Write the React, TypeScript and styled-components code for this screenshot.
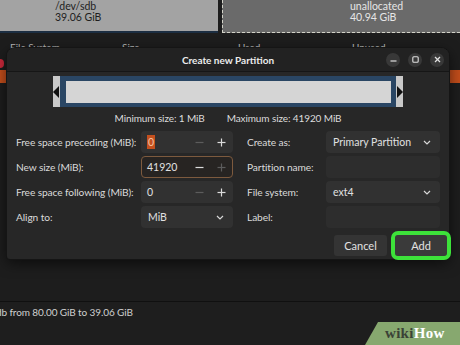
import styled, { createGlobalStyle } from 'styled-components'

const GlobalStyle = createGlobalStyle`
    html, body {
        margin: 0;
        padding: 0;
        background: #1d1d1d;
    }
    body {
        font-family: Lato, 'Noto Sans', sans-serif;
        font-size: 10px;
        color: #dedede;
    }
`

const ChevronDown = () => (
    <svg width='8' height='5' viewBox='0 0 8 5'>
        <polyline points='1,1 4,4 7,1' fill='none' stroke='#d8d8d8' strokeWidth='1.2' />
    </svg>
)

const MinusIcon = ({ dim }: { dim?: boolean }) => (
    <svg width='9' height='9' viewBox='0 0 9 9'>
        <line x1='0.5' y1='4.5' x2='8.5' y2='4.5' stroke={dim ? '#5c5c5c' : '#dcdcdc'} strokeWidth='1.2' />
    </svg>
)

const PlusIcon = ({ dim }: { dim?: boolean }) => (
    <svg width='9' height='9' viewBox='0 0 9 9'>
        <line x1='0.5' y1='4.5' x2='8.5' y2='4.5' stroke={dim ? '#5c5c5c' : '#dcdcdc'} strokeWidth='1.2' />
        <line x1='4.5' y1='0.5' x2='4.5' y2='8.5' stroke={dim ? '#5c5c5c' : '#dcdcdc'} strokeWidth='1.2' />
    </svg>
)

function SpinBox({ value, minusDim, plusDim, focused, selected }: any) {
    return (
        <Spin $focused={focused}>
            <SpinValue>{selected ? <Selection>{value}</Selection> : value}</SpinValue>
            <SpinButton>
                <MinusIcon dim={minusDim} />
            </SpinButton>
            <SpinButton>
                <PlusIcon dim={plusDim} />
            </SpinButton>
        </Spin>
    )
}

function Combo({ value }: { value: string }) {
    return (
        <Select>
            <span>{value}</span>
            <ChevronDown />
        </Select>
    )
}

export default function App() {
    return (
        <>
            <GlobalStyle />
            <Screen>
                <DiskMap>
                    <PartBlock $kind='used'>
                        <div>/dev/sdb</div>
                        <div>39.06 GiB</div>
                    </PartBlock>
                    <PartBlock $kind='free'>
                        <div>unallocated</div>
                        <div>40.94 GiB</div>
                    </PartBlock>
                </DiskMap>
                <ColumnHeads>
                    <span>File System</span>
                    <span>Size</span>
                    <span>Used</span>
                    <span>Unused</span>
                </ColumnHeads>
                <PartList>
                    <ListRow>
                        <Dot />
                    </ListRow>
                    <ListRow $selected />
                </PartList>
                <Spacer />
                <StatusBar>
                    <StatusText>Shrink /dev/sdb from 80.00 GiB to 39.06 GiB</StatusText>
                </StatusBar>

                <Dialog>
                    <TitleBar>
                        <span />
                        <Title>Create new Partition</Title>
                        <WindowControls>
                            <WinButton>
                                <svg width='7' height='7' viewBox='0 0 7 7'>
                                    <line x1='0.5' y1='5' x2='6.5' y2='5' stroke='#e0e0e0' strokeWidth='1.2' />
                                </svg>
                            </WinButton>
                            <WinButton>
                                <svg width='7' height='7' viewBox='0 0 7 7'>
                                    <rect x='0.8' y='0.8' width='5.4' height='5.4' rx='1' fill='none' stroke='#e0e0e0' strokeWidth='1.1' />
                                </svg>
                            </WinButton>
                            <WinButton>
                                <svg width='7' height='7' viewBox='0 0 7 7'>
                                    <line x1='1' y1='1' x2='6' y2='6' stroke='#e0e0e0' strokeWidth='1.2' />
                                    <line x1='6' y1='1' x2='1' y2='6' stroke='#e0e0e0' strokeWidth='1.2' />
                                </svg>
                            </WinButton>
                        </WindowControls>
                    </TitleBar>

                    <DialogBody>
                        <SizeBar>
                            <Handle $side='left'>
                                <svg width='6' height='12' viewBox='0 0 6 12'>
                                    <polygon points='0,6 6,0 6,12' fill='#111' />
                                </svg>
                            </Handle>
                            <BarFrame>
                                <BarFill />
                            </BarFrame>
                            <Handle $side='right'>
                                <svg width='6' height='12' viewBox='0 0 6 12'>
                                    <polygon points='6,6 0,0 0,12' fill='#111' />
                                </svg>
                            </Handle>
                        </SizeBar>

                        <Limits>
                            <span>Minimum size: 1 MiB</span>
                            <span>Maximum size: 41920 MiB</span>
                        </Limits>

                        <Form>
                            <FieldGrid $labelWidth={125} $controlWidth={92}>
                                <Label>Free space preceding (MiB):</Label>
                                <SpinBox value='0' minusDim selected />
                                <Label>New size (MiB):</Label>
                                <SpinBox value='41920' plusDim focused />
                                <Label>Free space following (MiB):</Label>
                                <SpinBox value='0' minusDim />
                                <Label>Align to:</Label>
                                <Combo value='MiB' />
                            </FieldGrid>
                            <FieldGrid $labelWidth={79} $controlWidth={114}>
                                <Label>Create as:</Label>
                                <Combo value='Primary Partition' />
                                <Label>Partition name:</Label>
                                <Entry />
                                <Label>File system:</Label>
                                <Combo value='ext4' />
                                <Label>Label:</Label>
                                <Entry />
                            </FieldGrid>
                        </Form>

                        <Actions>
                            <ActionButton>Cancel</ActionButton>
                            <ActionButton $highlight>Add</ActionButton>
                        </Actions>
                    </DialogBody>
                </Dialog>

                <Watermark>
                    <WikiPart>wiki</WikiPart>
                    <HowPart>How</HowPart>
                </Watermark>
            </Screen>
        </>
    )
}

const Screen = styled.div`
    position: relative;
    width: 460px;
    height: 345px;
    overflow: hidden;
    display: flex;
    flex-direction: column;
    background: #1d1d1d;
`

const DiskMap = styled.div`
    display: flex;
    gap: 4px;
    height: 33px;
    flex-shrink: 0;
`

const PartBlock = styled.div<{ $kind: 'used' | 'free' }>`
    box-sizing: border-box;
    font-size: 10.5px;
    line-height: 11px;
    padding-top: 1px;
    ${({ $kind }) =>
        $kind === 'used'
            ? `
        width: 218px;
        background: #a3a3a3;
        color: #1e1e1e;
        border-bottom: 2px solid #1c2e42;
        padding-left: 55px;
    `
            : `
        flex: 1;
        background: #6a6a6a;
        color: #e6e6e6;
        border-left: 1px dashed #d2d2c8;
        border-bottom: 1px dashed #d2d2c8;
        padding-left: 127px;
    `}
`

const ColumnHeads = styled.div`
    display: grid;
    grid-template-columns: 112px 116px 114px 1fr;
    padding: 8px 0 0 10px;
    height: 15px;
    box-sizing: border-box;
    color: #b8b8b8;
    font-size: 10px;
    line-height: 12px;
    flex-shrink: 0;
`

const PartList = styled.div`
    margin-top: 9px;
    display: flex;
    flex-direction: column;
`

const ListRow = styled.div<{ $selected?: boolean }>`
    height: 13px;
    display: flex;
    align-items: center;
    background: ${({ $selected }) => ($selected ? '#c24d1b' : 'transparent')};
`

const Dot = styled.div`
    width: 4px;
    height: 9px;
    border-radius: 0 5px 5px 0;
    background: #c8283a;
`

const Spacer = styled.div`
    flex: 1;
`

const StatusBar = styled.div`
    height: 44px;
    flex-shrink: 0;
    border-top: 1px solid #101010;
    background: #1e1e1e;
    padding-top: 3px;
    box-sizing: border-box;
    overflow: hidden;
`

const StatusText = styled.div`
    margin-left: -61px;
    white-space: nowrap;
    font-size: 10px;
    letter-spacing: -0.1px;
    color: #d0d0d0;
    line-height: 14px;
`

const Dialog = styled.div`
    position: absolute;
    left: 7px;
    top: 48px;
    width: 442px;
    height: 211px;
    background: #272727;
    border-radius: 8px 8px 3px 3px;
    box-shadow: 0 0 0 1px #151515, 0 4px 14px rgba(0, 0, 0, 0.6);
    display: flex;
    flex-direction: column;
`

const TitleBar = styled.div`
    height: 23px;
    flex-shrink: 0;
    display: grid;
    grid-template-columns: 1fr auto 1fr;
    align-items: center;
    background: #222222;
    border-radius: 8px 8px 0 0;
    border-bottom: 1px solid #161616;
`

const Title = styled.span`
    font-weight: 700;
    font-size: 10px;
    color: #ececec;
`

const WindowControls = styled.div`
    display: flex;
    justify-content: flex-end;
    gap: 8px;
    padding-right: 5px;
`

const WinButton = styled.div`
    width: 14px;
    height: 14px;
    border-radius: 50%;
    background: #383838;
    display: flex;
    align-items: center;
    justify-content: center;
`

const DialogBody = styled.div`
    padding: 4px 9px 0;
    display: flex;
    flex-direction: column;
`

const SizeBar = styled.div`
    margin-left: 37px;
    width: 350px;
    height: 31px;
    display: flex;
`

const Handle = styled.div<{ $side: 'left' | 'right' }>`
    width: 7px;
    background: #c9c9c9;
    display: flex;
    align-items: center;
    justify-content: ${({ $side }) => ($side === 'left' ? 'flex-start' : 'flex-end')};
`

const BarFrame = styled.div`
    flex: 1;
    background: #2a4664;
    padding: 5px 5px 4px 6px;
    display: flex;
`

const BarFill = styled.div`
    flex: 1;
    background: #d5d5d5;
`

const Limits = styled.div`
    display: flex;
    justify-content: center;
    gap: 22px;
    margin-top: 5px;
    height: 12px;
    line-height: 12px;
    font-size: 10px;
    letter-spacing: -0.1px;
    color: #dcdcdc;
`

const Form = styled.div`
    display: flex;
    gap: 14px;
    margin-top: 7px;
`

const FieldGrid = styled.div<{ $labelWidth: number; $controlWidth: number }>`
    display: grid;
    grid-template-columns: ${({ $labelWidth, $controlWidth }) => `${$labelWidth}px ${$controlWidth}px`};
    grid-auto-rows: 22px;
    row-gap: 3px;
    align-items: center;
`

const Label = styled.span`
    font-size: 10.2px;
    letter-spacing: -0.1px;
    color: #dadada;
    white-space: nowrap;
`

const Field = styled.div`
    box-sizing: border-box;
    height: 22px;
    border-radius: 4px;
    background: #313131;
    display: flex;
    align-items: center;
    font-size: 10.5px;
    color: #e0e0e0;
`

const Spin = styled(Field)<{ $focused?: boolean }>`
    border: 1px solid ${({ $focused }) => ($focused ? '#7d5a3e' : 'transparent')};
    background: ${({ $focused }) => ($focused ? '#272422' : '#313131')};
`

const SpinValue = styled.span`
    flex: 1;
    padding-left: 5px;
`

const Selection = styled.span`
    display: inline-block;
    background: #c4501e;
    color: #f3c2a2;
    padding: 0 1px;
    line-height: 14px;
`

const SpinButton = styled.div`
    width: 22px;
    height: 100%;
    display: flex;
    align-items: center;
    justify-content: center;
`

const Select = styled(Field)`
    justify-content: space-between;
    padding: 0 9px 0 7px;
`

const Entry = styled(Field)`
    background: #2d2d2d;
`

const Actions = styled.div`
    display: flex;
    justify-content: flex-end;
    gap: 8px;
    margin-top: 7px;
    margin-right: -7px;
`

const ActionButton = styled.div<{ $highlight?: boolean }>`
    width: ${({ $highlight }) => ($highlight ? '52px' : '53px')};
    height: 21px;
    border-radius: 3px;
    background: ${({ $highlight }) => ($highlight ? '#3a3a3a' : '#343434')};
    color: #e2e2e2;
    font-size: 11px;
    display: flex;
    align-items: center;
    justify-content: center;
    outline: ${({ $highlight }) => ($highlight ? '4px solid #3de23a' : 'none')};
`

const Watermark = styled.div`
    position: absolute;
    right: 0;
    bottom: 0;
    width: 95px;
    height: 23px;
    background: #87a86f;
    clip-path: polygon(13px 0, 100% 0, 100% 100%, 0 100%);
    box-sizing: border-box;
    padding-left: 20px;
    display: flex;
    align-items: center;
    font-family: 'Liberation Serif', 'DejaVu Serif', serif;
    font-weight: 700;
    font-size: 15px;
    letter-spacing: 0.3px;
`

const WikiPart = styled.span`
    color: #3b4236;
`

const HowPart = styled.span`
    color: #ffffff;
`
